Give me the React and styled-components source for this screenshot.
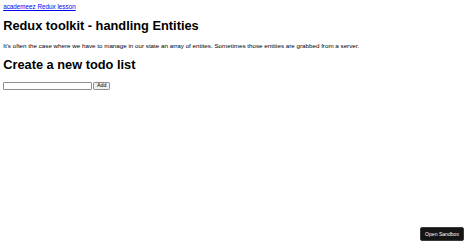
import React from "react";
import styled, { createGlobalStyle } from "styled-components";

const Global = createGlobalStyle`
  html, body { background: #ffffff; }
  body {
    margin: 3.2px;
    font-family: "Liberation Sans", Arial, sans-serif;
    color: #000000;
  }
`;

const Page = styled.div`
  display: flex;
  flex-direction: column;
`;

const Lesson = styled.a`
  font-size: 6.3px;
  line-height: 7.36px;
  color: #0000ee;
  text-decoration: underline;
  align-self: flex-start;
`;

const Title = styled.h1`
  font-size: 12.8px;
  line-height: 14.72px;
  font-weight: bold;
  margin: 8.58px 0;
`;

const Text = styled.p`
  font-size: 6.24px;
  line-height: 7.36px;
  margin: 0;
`;

const Form = styled.form`
  display: flex;
  align-items: center;
  gap: 1.6px;
  margin: 0;
`;

const Field = styled.input`
  box-sizing: border-box;
  width: 88.6px;
  height: 7.8px;
  padding: 0 1px;
  border: 0.8px solid #8f8f8f;
  border-radius: 1px;
  background: #ffffff;
  font-size: 5.3px;
  font-family: "Liberation Sans", Arial, sans-serif;
  outline: none;
`;

const Button = styled.button`
  box-sizing: border-box;
  height: 8.4px;
  padding: 0 2.6px;
  border: 0.8px solid #8f8f8f;
  border-radius: 1.2px;
  background: #efefef;
  color: #000000;
  font-size: 5.3px;
  line-height: 1;
  font-family: "Liberation Sans", Arial, sans-serif;
`;

const Sandbox = styled.a`
  position: fixed;
  right: 9.7px;
  bottom: 7.3px;
  box-sizing: border-box;
  display: flex;
  align-items: center;
  justify-content: center;
  height: 14px;
  padding: 0 4.3px;
  background: #151515;
  border: 0.6px solid #3a3a3a;
  border-radius: 2px;
  color: #ffffff;
  font-size: 5.1px;
  font-family: "Liberation Sans", Arial, sans-serif;
  text-decoration: none;
`;

export default function App() {
  return (
    <>
      <Global />
      <Page>
        <Lesson href="#">academeez Redux lesson</Lesson>
        <Title>Redux toolkit - handling Entities</Title>
        <Text>
          It's often the case where we have to manage in our state an array of
          entites. Sometimes those entities are grabbed from a server.
        </Text>
        <Title>Create a new todo list</Title>
        <Form onSubmit={(e) => e.preventDefault()}>
          <Field type="text" />
          <Button type="submit">Add</Button>
        </Form>
      </Page>
      <Sandbox href="#">Open Sandbox</Sandbox>
    </>
  );
}
